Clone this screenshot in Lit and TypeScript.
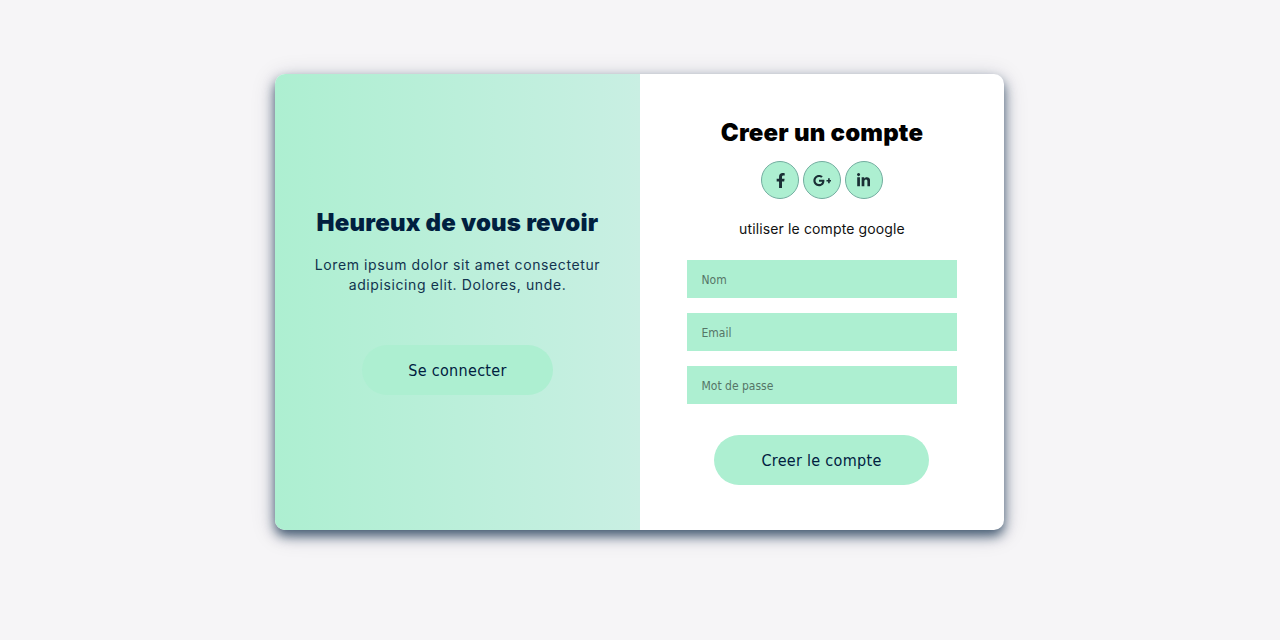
import { LitElement, html, css } from "lit";
import { customElement } from "lit/decorators.js";

@customElement("app-root")
export class AppRoot extends LitElement {
  static styles = css`
    :host {
      display: block;
      min-height: 640px;
      box-sizing: border-box;
      background: #f6f5f7;
      padding: 74px 0 0 275px;
      font-family: "Inter", "Liberation Sans", sans-serif;
    }
    .card {
      width: 729px;
      height: 456px;
      display: grid;
      grid-template-columns: 365px 364px;
      border-radius: 10px;
      overflow: hidden;
      background: #fff;
      box-shadow: 0 4px 24px rgba(0, 32, 63, 0.2), 0 6px 12px rgba(0, 32, 63, 0.68);
    }
    .left {
      background: linear-gradient(to right, #adefd1, #c9efe3);
      display: flex;
      flex-direction: column;
      align-items: center;
      color: #00203f;
      padding-top: 134px;
      box-sizing: border-box;
    }
    h1 {
      margin: 0;
      font-size: 24px;
      line-height: 30px;
      font-weight: 900;
      letter-spacing: 0.2px;
      text-align: center;
      white-space: nowrap;
    }
    .left h1 { color: #00203f; }
    .left p {
      margin: 17px 0 0;
      width: 300px;
      font-size: 14px;
      line-height: 20px;
      letter-spacing: 0.6px;
      text-align: center;
      font-weight: 400;
      opacity: 0.9;
    }
    button {
      display: block;
      height: 50px;
      border: none;
      border-radius: 25px;
      background: #adefd1;
      color: #00203f;
      font-family: "DejaVu Sans Condensed", "DejaVu Sans", sans-serif;
      font-stretch: condensed;
      font-size: 16px;
      letter-spacing: 0.3px;
      padding: 0;
      text-align: center;
    }
    .signin { width: 191px; margin: 50px 0 0; }
    .signup { width: 215px; margin: 31px 1px 0 0; padding-top: 2px; }
    .right {
      display: flex;
      flex-direction: column;
      align-items: center;
      padding-top: 44px;
      box-sizing: border-box;
    }
    .right h1 { color: #000; }
    .socials {
      display: flex;
      gap: 3.8px;
      margin: 13px 0 0;
    }
    .social {
      width: 38px;
      height: 38px;
      box-sizing: border-box;
      border-radius: 50%;
      background: #adefd1;
      border: 1.5px solid #72ad9f;
      display: flex;
      align-items: center;
      justify-content: center;
    }
    .social svg { height: 15px; fill: #1a2f35; display: block; }
    .hint {
      margin: 20px 0 0;
      font-size: 14px;
      line-height: 20px;
      letter-spacing: 0.13px;
      color: #111;
    }
    .fields {
      margin-top: 21px;
      display: flex;
      flex-direction: column;
      gap: 15.6px;
    }
    input {
      display: block;
      width: 270px;
      height: 37.6px;
      box-sizing: border-box;
      border: none;
      padding: 2px 14.5px 0;
      background: #adefd1;
      font-family: "DejaVu Sans Condensed", "DejaVu Sans", sans-serif;
      font-stretch: condensed;
      font-size: 12px;
      outline: none;
    }
    input::placeholder { color: #557567; opacity: 1; }
  `;

  render() {
    return html`
      <div class="card">
        <section class="left">
          <h1>Heureux de vous revoir</h1>
          <p>Lorem ipsum dolor sit amet consectetur adipisicing elit. Dolores, unde.</p>
          <button class="signin">Se connecter</button>
        </section>
        <section class="right">
          <h1>Creer un compte</h1>
          <div class="socials">
            <span class="social"><svg viewBox="0 0 320 512"><path d="M279.14 288l14.22-92.66h-88.91v-60.13c0-25.35 12.42-50.06 52.24-50.06h40.42V6.26S260.43 0 225.36 0c-73.22 0-121.08 44.38-121.08 124.72v70.62H22.89V288h81.39v224h100.17V288z"/></svg></span>
            <span class="social"><svg viewBox="0 0 640 512"><path d="M386.061 228.496c1.834 9.692 3.143 19.384 3.143 31.956C389.204 370.205 315.599 448 204.8 448c-106.084 0-192-85.915-192-192s85.916-192 192-192c51.864 0 95.083 18.859 128.611 50.292l-52.126 50.03c-14.145-13.621-39.028-29.599-76.485-29.599-65.484 0-118.92 54.221-118.92 121.277 0 67.056 53.436 121.277 118.92 121.277 75.961 0 104.513-54.745 108.965-82.773H204.8v-66.009h181.261zm185.406 6.437V179.2h-56.001v55.733h-55.733v56.001h55.733v55.733h56.001v-55.733H627.2v-56.001h-55.733z"/></svg></span>
            <span class="social"><svg viewBox="0 0 448 512"><path d="M100.28 448H7.4V148.9h92.88zM53.79 108.1C24.09 108.1 0 83.5 0 53.8a53.79 53.79 0 0 1 107.58 0c0 29.7-24.1 54.3-53.79 54.3zM447.9 448h-92.68V302.4c0-34.7-.7-79.2-48.29-79.2-48.29 0-55.69 37.7-55.69 76.7V448h-92.78V148.9h89.08v40.8h1.3c12.4-23.5 42.69-48.3 87.88-48.3 94 0 111.28 61.9 111.28 142.3V448z"/></svg></span>
          </div>
          <p class="hint">utiliser le compte google</p>
          <div class="fields">
            <input type="text" placeholder="Nom" />
            <input type="email" placeholder="Email" />
            <input type="password" placeholder="Mot de passe" />
          </div>
          <button class="signup">Creer le compte</button>
        </section>
      </div>
    `;
  }
}
